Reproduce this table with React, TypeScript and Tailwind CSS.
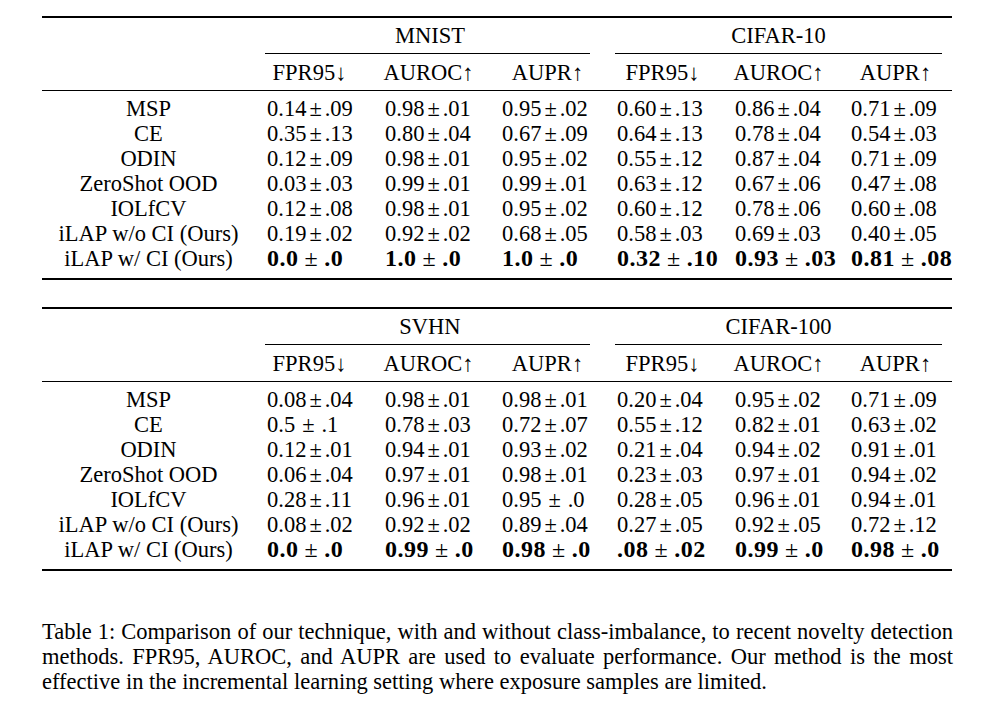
type Row = { name: string; cells: string[]; best?: boolean }
type TableData = { sets: [string, string]; rows: Row[] }

const tables: TableData[] = [
  {
    sets: ['MNIST', 'CIFAR-10'],
    rows: [
      { name: 'MSP', cells: ['0.14±.09', '0.98±.01', '0.95±.02', '0.60±.13', '0.86±.04', '0.71±.09'] },
      { name: 'CE', cells: ['0.35±.13', '0.80±.04', '0.67±.09', '0.64±.13', '0.78±.04', '0.54±.03'] },
      { name: 'ODIN', cells: ['0.12±.09', '0.98±.01', '0.95±.02', '0.55±.12', '0.87±.04', '0.71±.09'] },
      { name: 'ZeroShot OOD', cells: ['0.03±.03', '0.99±.01', '0.99±.01', '0.63±.12', '0.67±.06', '0.47±.08'] },
      { name: 'IOLfCV', cells: ['0.12±.08', '0.98±.01', '0.95±.02', '0.60±.12', '0.78±.06', '0.60±.08'] },
      { name: 'iLAP w/o CI (Ours)', cells: ['0.19±.02', '0.92±.02', '0.68±.05', '0.58±.03', '0.69±.03', '0.40±.05'] },
      {
        name: 'iLAP w/ CI (Ours)',
        best: true,
        cells: ['0.0 ± .0', '1.0 ± .0', '1.0 ± .0', '0.32 ± .10', '0.93 ± .03', '0.81 ± .08'],
      },
    ],
  },
  {
    sets: ['SVHN', 'CIFAR-100'],
    rows: [
      { name: 'MSP', cells: ['0.08±.04', '0.98±.01', '0.98±.01', '0.20±.04', '0.95±.02', '0.71±.09'] },
      { name: 'CE', cells: ['0.5 ± .1', '0.78±.03', '0.72±.07', '0.55±.12', '0.82±.01', '0.63±.02'] },
      { name: 'ODIN', cells: ['0.12±.01', '0.94±.01', '0.93±.02', '0.21±.04', '0.94±.02', '0.91±.01'] },
      { name: 'ZeroShot OOD', cells: ['0.06±.04', '0.97±.01', '0.98±.01', '0.23±.03', '0.97±.01', '0.94±.02'] },
      { name: 'IOLfCV', cells: ['0.28±.11', '0.96±.01', '0.95 ± .0', '0.28±.05', '0.96±.01', '0.94±.01'] },
      { name: 'iLAP w/o CI (Ours)', cells: ['0.08±.02', '0.92±.02', '0.89±.04', '0.27±.05', '0.92±.05', '0.72±.12'] },
      {
        name: 'iLAP w/ CI (Ours)',
        best: true,
        cells: ['0.0 ± .0', '0.99 ± .0', '0.98 ± .0', '.08 ± .02', '0.99 ± .0', '0.98 ± .0'],
      },
    ],
  },
]

const metrics = ['FPR95↓', 'AUROC↑', 'AUPR↑', 'FPR95↓', 'AUROC↑', 'AUPR↑']
const headPad = ['pr-[9px]', 'pr-[6px]', '', 'pr-[3px]', 'pr-[5px]', '']
const grid = 'grid grid-cols-[213px_118px_117px_115px_118px_116px_113px]'

const Value = ({ v, bold }: { v: string; bold?: boolean }) => {
  const [mean, err] = v.split('±').map((s) => s.trim())
  const spaced = bold || v.includes(' ± ')
  return (
    <span className={bold ? 'font-bold text-[24px] tracking-[0.5px]' : ''}>
      {mean}
      <span className={spaced ? (bold ? 'mx-[6px] font-normal' : 'mx-[7px]') : 'mx-[3px]'}>±</span>
      {err}
    </span>
  )
}

const ResultTable = ({ data }: { data: TableData }) => (
  <div className="w-[910px]">
    <div className="h-[2px] bg-black" />
    <div className={`${grid} h-[35px] items-center`}>
      <div />
      <div className="col-span-3 text-center">{data.sets[0]}</div>
      <div className="col-span-3 text-center">{data.sets[1]}</div>
    </div>
    <div className={`${grid} h-px`}>
      <div />
      <div className="col-span-3 ml-[10px] mr-[15px] bg-black" />
      <div className="col-span-3 ml-[10px] mr-[10px] bg-black" />
    </div>
    <div className={`${grid} h-[36px] items-center`}>
      <div />
      {metrics.map((m, i) => (
        <div key={i} className={`text-center ${headPad[i]}`}>
          {m}
        </div>
      ))}
    </div>
    <div className="h-px bg-black" />
    <div className="pt-[5px] pb-[7px]">
      {data.rows.map((row) => (
        <div key={row.name} className={`${grid} h-[25px] items-center whitespace-nowrap`}>
          <div className="text-center">{row.name}</div>
          {row.cells.map((c, i) => (
            <div key={i} className="pl-[12px]">
              <Value v={c} bold={row.best} />
            </div>
          ))}
        </div>
      ))}
    </div>
    <div className="h-[2px] bg-black" />
  </div>
)

export default function App() {
  return (
    <div className="min-h-screen w-[986px] bg-white text-black font-['Liberation_Serif','Times_New_Roman',serif] text-[22.5px] leading-[25px]">
      <div className="pl-[42px] pt-[16px]">
        <ResultTable data={tables[0]} />
        <div className="h-[27px]" />
        <ResultTable data={tables[1]} />
        <div className="mt-[48px] w-[911px]">
          <div className="text-justify [text-align-last:justify] whitespace-nowrap">
            Table 1: Comparison of our technique, with and without class-imbalance, to recent novelty detection
          </div>
          <div className="text-justify [text-align-last:justify] whitespace-nowrap">
            methods. FPR95, AUROC, and AUPR are used to evaluate performance. Our method is the most
          </div>
          <div>effective in the incremental learning setting where exposure samples are limited.</div>
        </div>
      </div>
    </div>
  )
}
